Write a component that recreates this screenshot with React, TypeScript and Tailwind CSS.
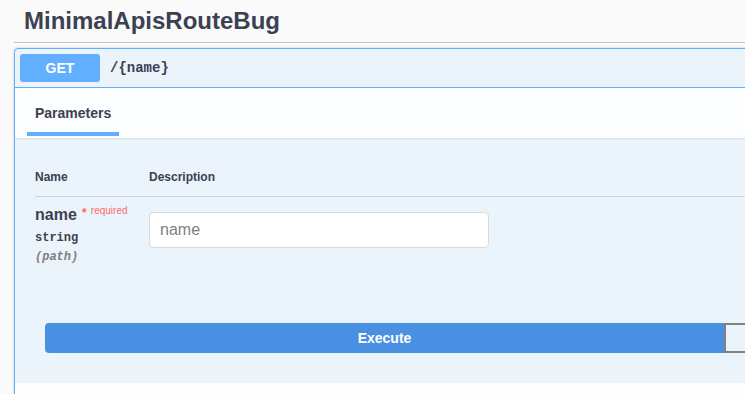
import React from 'react';

const mono = "font-['Liberation_Mono','DejaVu_Sans_Mono',monospace]";

export default function App() {
  return (
    <div className="w-[745px] h-[394px] overflow-hidden bg-[#fafafa] text-[#3b4151] font-['Liberation_Sans',Arial,sans-serif]">
      <div className="w-[1500px] pl-[14px]">
        {/* Title */}
        <div className="h-[42px] pl-[10px] flex items-center">
          <h2 className="text-[24px] font-bold leading-none">MinimalApisRouteBug</h2>
        </div>
        <div className="h-px bg-[#c4c4c4]" />

        {/* Operation block */}
        <div className="mt-[5px] border border-[#61affe] rounded-[4px] bg-[#ebf3fb] shadow-[0_0_3px_rgba(0,0,0,0.19)]">
          <div className="flex items-center px-[5px] py-[5px] border-b border-[#61affe]">
            <span className="w-[80px] h-[28px] rounded-[3px] bg-[#61affe] text-white text-[14px] font-bold flex items-center justify-center">
              GET
            </span>
            <span className={`ml-[10px] text-[14px] font-bold ${mono}`}>/{'{name}'}</span>
          </div>

          {/* Tab header */}
          <div className="bg-[#fbfdfe] shadow-[0_1px_2px_rgba(0,0,0,0.1)] px-[12px] pt-[13px] pb-[2px]">
            <div className="inline-flex flex-col">
              <span className="px-[8px] text-[14px] font-bold leading-[20px]">Parameters</span>
              <span className="mt-[9px] h-[4px] bg-[#61affe]" />
            </div>
          </div>

          {/* Parameters table */}
          <div className="px-[20px]">
            <div className="flex pt-[31px] pb-[11px] border-b border-[#c9d2de] text-[12px] font-bold leading-[16px]">
              <span className="w-[114px]">Name</span>
              <span>Description</span>
            </div>
            <div className="flex">
              <div className="w-[114px] pt-[8px]">
                <div className="flex items-start leading-[20px]">
                  <span className="text-[16px] font-bold">name</span>
                  <span className="ml-[5px] mt-[-2px] text-[13px] font-bold text-[#ff6b6b]">*</span>
                  <span className="ml-[4px] mt-[-4px] text-[10px] text-[#ff6b6b]">required</span>
                </div>
                <div className={`mt-[5px] text-[12px] font-semibold leading-[16px] ${mono}`}>string</div>
                <div className={`mt-[3px] text-[12px] font-semibold italic leading-[16px] text-[#808080] ${mono}`}>(path)</div>
              </div>
              <div className="pt-[15px]">
                <input
                  placeholder="name"
                  className="w-[340px] h-[36px] px-[10px] bg-white border border-[#d9d9d9] rounded-[4px] text-[16px] placeholder:text-[#808080] outline-none"
                />
              </div>
            </div>
          </div>

          {/* Execute */}
          <div className="flex px-[30px] pt-[58px] pb-[30px]">
            <button className="shrink-0 w-[679px] h-[30px] bg-[#4990e2] text-white text-[14px] font-bold rounded-l-[4px]">
              Execute
            </button>
            <button className="shrink-0 w-[679px] h-[30px] border-2 border-[#808080] rounded-r-[4px]" />
          </div>

          <div className="h-[40px] bg-[#fbfdfe]" />
        </div>
      </div>
    </div>
  );
}
